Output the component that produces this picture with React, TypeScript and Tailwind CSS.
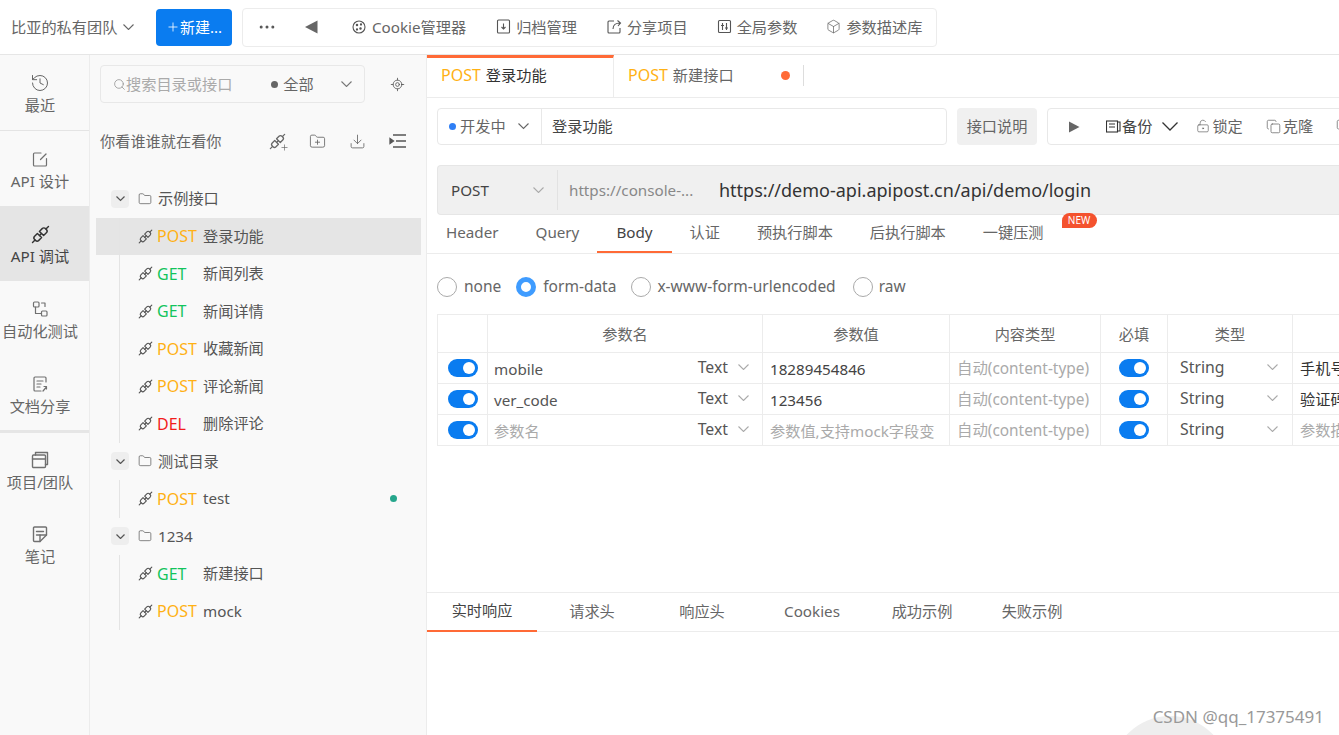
import { Box, History, Folder, FolderPlus, Download, LockKeyholeOpen, Copy, Search, LocateFixed, Ellipsis, Plus } from "lucide-react";

const font = "font-['Noto_Sans','Noto_Sans_CJK_SC',sans-serif]";

function Chev({ w = 11, sw = 1.1, className = "" }: { w?: number; sw?: number; className?: string }) {
    return <svg width={w} height={w / 2 + 1} viewBox={`0 0 ${w} ${w / 2 + 1}`} fill="none" stroke="currentColor" strokeWidth={sw} className={`shrink-0 ${className}`}>
        <path d={`M0.500 0.500 ${w / 2} ${w / 2} ${w - 0.5} 0.500`} />
    </svg>
}

function PlugIcon({ size = 15, color = "#555" }: { size?: number; color?: string }) {
    return <svg width={size} height={size} viewBox="0 0 16 16" fill="none" stroke={color} strokeWidth={1.2} strokeLinecap="round" strokeLinejoin="round">
        <g transform="rotate(45 8 8)">
            <path d="M8 -1.500V1.500" />
            <path d="M5.500 6.800V3.500a2 2 0 0 1 2-2h1a2 2 0 0 1 2 2v3.300z" />
            <path d="M8 6.800v2.400" />
            <path d="M5.500 9.200v3.300a2 2 0 0 0 2 2h1a2 2 0 0 0 2-2V9.200z" />
            <path d="M8 14.500v3" />
        </g>
    </svg>
}

function RailIcon({ name }: { name: string }) {
    const common = { width: 20, height: 20, viewBox: "0 0 20 20", fill: "none", stroke: "#707070", strokeWidth: 1.2, strokeLinecap: "round" as const, strokeLinejoin: "round" as const };
    if (name === "history") return <History size={20} color="#666" strokeWidth={1.2} />;
    if (name === "edit") return <svg {...common}><path d="M11 4H4.500a1 1 0 0 0-1 1v11a1 1 0 0 0 1 1h11a1 1 0 0 0 1-1V9.500" /><path d="M10.500 10.500 16 5" /></svg>;
    if (name === "plug") return <PlugIcon size={19} color="#333" />;
    if (name === "flow") return <svg {...common}><rect x="3.500" y="3" width="5.500" height="5" rx="1" /><rect x="11.500" y="12" width="5.500" height="5" rx="1" /><path d="M5.500 8v6.500h6" /><path d="M11.500 4h3.500v3.500" /></svg>;
    if (name === "doc") return <svg {...common}><path d="M16 8V4a1 1 0 0 0-1-1H5a1 1 0 0 0-1 1v12a1 1 0 0 0 1 1h6" /><path d="M7 7h6M7 10h4M7 13h3" /><path d="M13 17l3.500-4M14 12.500h2.500V15" /></svg>;
    if (name === "project") return <svg {...common} strokeWidth={1.4}><rect x="2.500" y="5" width="13" height="12.500" rx="1" /><path d="M2.500 9h13" /><path d="M5.500 5V2.500h12V14.500h-2" /></svg>;
    return <svg {...common} strokeWidth={1.4}><path d="M16.500 11V4a1 1 0 0 0-1-1h-11a1 1 0 0 0-1 1v12.500a1 1 0 0 0 1 1H10z" /><path d="M6.500 7.500h7M6.500 11h3.500" /><path d="M16.500 11H10v6.500" /></svg>;
}

const rail = [
    { icon: "history", label: "最近", cls: "h-[76px] border-b border-[#e4e4e4]" },
    { icon: "edit", label: "API 设计", cls: "h-[75px]" },
    { icon: "plug", label: "API 调试", cls: "h-[75px] bg-[#e5e5e5] text-[#444]" },
    { icon: "flow", label: "自动化测试", cls: "h-[75px]" },
    { icon: "doc", label: "文档分享", cls: "h-[77px] border-b-[3px] border-[#e6e6e6]" },
    { icon: "project", label: "项目/团队", cls: "h-[73px]" },
    { icon: "note", label: "笔记", cls: "h-[75px]" },
];

const methodColor: Record<string, string> = {
    POST: "text-[#ffb114]",
    GET: "text-[#13c45c]",
    DEL: "text-[#f21c1c]",
};

type TreeGroup = { name: string; items: { method: string; name: string; active?: boolean; dot?: boolean }[] };

const tree: TreeGroup[] = [
    {
        name: "示例接口", items: [
            { method: "POST", name: "登录功能", active: true },
            { method: "GET", name: "新闻列表" },
            { method: "GET", name: "新闻详情" },
            { method: "POST", name: "收藏新闻" },
            { method: "POST", name: "评论新闻" },
            { method: "DEL", name: "删除评论" },
        ]
    },
    { name: "测试目录", items: [{ method: "POST", name: "test", dot: true }] },
    {
        name: "1234", items: [
            { method: "GET", name: "新建接口" },
            { method: "POST", name: "mock" },
        ]
    },
];

function Toggle() {
    return <span className="flex h-[18px] w-[30px] items-center justify-end rounded-full bg-[#0a7cf0] pr-[3px]">
        <span className="size-3 rounded-full bg-white" />
    </span>
}

function Cell({ w, className = "", children }: { w: string; className?: string; children?: React.ReactNode }) {
    return <div className={`${w} flex shrink-0 items-center border-r border-[#ececec] ${className}`}>{children}</div>
}

const rows = [
    { name: "mobile", value: "18289454846", desc: "手机号" },
    { name: "ver_code", value: "123456", desc: "验证码" },
    { name: "", value: "", desc: "" },
];

export default function App() {
    return <div className={`${font} flex h-[735px] w-[1339px] flex-col overflow-hidden bg-white text-[15.2px] text-[#666]`}>
        {/* top bar */}
        <header className="flex h-[55px] shrink-0 items-center border-b border-[#e6e6e6]">
            <div className="flex w-[156px] shrink-0 items-center pl-[11px]">
                <span className="whitespace-nowrap">比亚的私有团队</span>
                <Chev className="ml-[6px]" />
            </div>
            <button className="flex h-[37px] w-[76px] items-center justify-center rounded bg-[#0a7cf0] text-[15px] text-white">
                <Plus size={14} strokeWidth={1.4} />新建...
            </button>
            <div className="ml-[10px] flex h-[39px] w-[695px] items-center rounded border border-[#ececec] whitespace-nowrap">
                <Ellipsis size={20} strokeWidth={1.6} className="ml-[14px] text-[#555]" />
                <svg width="14" height="14" viewBox="0 0 14 14" className="ml-[27px]"><path d="M13.500 0.500V13.500L1 7z" fill="#666" /></svg>
                <span className="ml-[34px] flex items-center gap-[6px]">
                    <svg width="14" height="14" viewBox="0 0 14 14" fill="none" stroke="#555" strokeWidth={1.1}><circle cx="7" cy="7" r="6" /><circle cx="5" cy="5" r="0.700" fill="#555" /><circle cx="9" cy="4.500" r="0.600" fill="#555" /><circle cx="8.500" cy="8.500" r="0.700" fill="#555" /><circle cx="5" cy="9.500" r="0.600" fill="#555" /></svg>
                    Cookie管理器
                </span>
                <span className="ml-[30px] flex items-center gap-[5px]">
                    <svg width="15" height="15" viewBox="0 0 15 15" fill="none" stroke="#555" strokeWidth={1.1}><rect x="1.500" y="1" width="12" height="13" rx="1" /><path d="M7.500 4.500v5M5.500 8l2 2 2-2" /></svg>
                    归档管理
                </span>
                <span className="ml-[30px] flex items-center gap-[5px]">
                    <svg width="15" height="15" viewBox="0 0 15 15" fill="none" stroke="#555" strokeWidth={1.1}><path d="M7 2H2a1 1 0 0 0-1 1v10a1 1 0 0 0 1 1h10a1 1 0 0 0 1-1V9" /><path d="M6 10c0-4 3-6 7-6M10.500 1.500 13.500 4l-2.500 3" /></svg>
                    分享项目
                </span>
                <span className="ml-[29px] flex items-center gap-[5px]">
                    <svg width="15" height="15" viewBox="0 0 15 15" fill="none" stroke="#555" strokeWidth={1.1}><rect x="1.500" y="1.500" width="12" height="12" rx="1" /><path d="M5.500 4v7M9.500 4v7M4 6.500h3M8 9h3" /></svg>
                    全局参数
                </span>
                <span className="ml-[29px] flex items-center gap-[5px]"><Box size={15} strokeWidth={1.2} />参数描述库</span>
            </div>
        </header>

        <div className="flex min-h-0 flex-1">
            {/* icon rail */}
            <nav className="w-[90px] shrink-0 border-r border-[#ececec] bg-[#f9f9f9]">
                {rail.map((r) => <div key={r.label} className={`flex flex-col items-center justify-center gap-[2px] pr-[9px] pt-[3px] ${r.cls}`}>
                    <RailIcon name={r.icon} />
                    <span className="whitespace-nowrap leading-5">{r.label}</span>
                </div>)}
            </nav>

            {/* tree */}
            <aside className="flex w-[337px] shrink-0 flex-col border-r border-[#ececec] bg-[#f9f9f9] pl-[6px] pr-[5px]">
                <div className="mt-[10px] flex items-center pl-1">
                    <div className="flex h-[38px] w-[265px] items-center rounded border border-[#e8e8e8] pl-[12px] pr-[12px] text-[#aaa]">
                        <Search size={13} strokeWidth={1.3} className="text-[#888]" />
                        <span className="whitespace-nowrap">搜索目录或接口</span>
                        <span className="ml-[39px] size-[7px] shrink-0 rounded-full bg-[#666]" />
                        <span className="ml-[5px] whitespace-nowrap text-[#666]">全部</span>
                        <Chev className="ml-auto text-[#777]" />
                    </div>
                    <LocateFixed size={15} strokeWidth={1.3} className="ml-[25px] text-[#555]" />
                </div>
                <div className="mt-[19px] flex h-[38px] items-center pl-1 pr-[14px]">
                    <span>你看谁谁就在看你</span>
                    <span className="ml-auto flex items-center gap-[23px] text-[#666]">
                        <span className="relative"><PlugIcon size={17} color="#666" /><Plus size={9} strokeWidth={1.8} className="absolute -bottom-[2px] -right-[3px]" /></span>
                        <FolderPlus size={17} strokeWidth={1.2} />
                        <Download size={17} strokeWidth={1.2} />
                        <svg width="18" height="16" viewBox="0 0 18 16" fill="none" stroke="#555" strokeWidth={1.3}><path d="M4 2h13M7 8h10M4 14h13" /><path d="M1 5.500 4.500 8 1 10.500z" fill="#555" /></svg>
                    </span>
                </div>
                <div className="mt-[20px]">
                    {tree.map((g) => <div key={g.name}>
                        <div className="flex h-[37.5px] items-center pl-[15px] text-[#555]">
                            <span className="flex size-[18px] items-center justify-center rounded bg-[#eeeeee]"><Chev w={9} sw={1.2} /></span>
                            <Folder size={14} strokeWidth={1.2} className="ml-[9px]" />
                            <span className="ml-[6px]">{g.name}</span>
                        </div>
                        <div className="relative">
                            <span className="absolute bottom-0 left-[23px] top-0 w-px bg-[#e4e4e4]" />
                            {g.items.map((it) => <div key={it.name} className={`flex h-[37.5px] items-center pl-[42px] pr-[24px] ${it.active ? "bg-[#e5e5e5]" : ""}`}>
                                <PlugIcon />
                                <span className={`ml-[4px] w-[46px] text-[16px] ${methodColor[it.method]}`}>{it.method}</span>
                                <span className="text-[#555]">{it.name}</span>
                                {it.dot && <span className="ml-auto size-[7px] rounded-full bg-[#26a68c]" />}
                            </div>)}
                        </div>
                    </div>)}
                </div>
            </aside>

            {/* main */}
            <main className="relative min-w-0 flex-1 overflow-hidden">
                <div className="flex h-[43px] border-b border-[#ececec]">
                    <div className="flex h-[42px] w-[187px] items-center border-r border-t-[3px] border-r-[#ececec] border-t-[#ff6a36] pb-[5px] pl-[14px]">
                        <span className="text-[16px] text-[#ffb114]">POST</span>
                        <span className="ml-[5px] text-[#333]">登录功能</span>
                    </div>
                    <div className="flex w-[189px] items-center pb-[2px] pl-[14px]">
                        <span className="text-[16px] text-[#ffb114]">POST</span>
                        <span className="ml-[5px] w-[108px] shrink-0">新建接口</span>
                        <span className="size-[9px] shrink-0 rounded-full bg-[#ff6a36]" />
                        <span className="ml-[13px] h-[21px] w-px shrink-0 bg-[#dddddd]" />
                    </div>
                </div>

                <div className="mt-[10px] flex h-[37px] pl-[10px]">
                    <div className="flex w-[510px] shrink-0 rounded border border-[#e8e8e8]">
                        <div className="flex w-[104px] shrink-0 items-center border-r border-[#e8e8e8] pl-[11px]">
                            <span className="size-[7px] shrink-0 rounded-full bg-[#2f7ff5]" />
                            <span className="ml-[4px] whitespace-nowrap">开发中</span>
                            <Chev className="ml-[12px]" />
                        </div>
                        <div className="flex items-center pl-[10px] text-[#444]">登录功能</div>
                    </div>
                    <button className="ml-[10px] w-[80px] shrink-0 rounded bg-[#f0f0f0] text-center">接口说明</button>
                    <div className="ml-[10px] flex w-[320px] shrink-0 items-center rounded border border-[#e8e8e8] whitespace-nowrap">
                        <svg width="12" height="12" viewBox="0 0 12 12" className="ml-[20px] shrink-0"><path d="M1 0.500 11.500 6 1 11.500z" fill="#666" /></svg>
                        <span className="ml-[26px] flex items-center gap-px text-[#444]">
                            <svg width="15" height="13" viewBox="0 0 15 13" fill="none" stroke="#333" strokeWidth={1.1}><rect x="0.500" y="1" width="11" height="11" /><path d="M3 4h6M3 7h6M11.500 2H14v9h-2.500" /></svg>
                            备份
                        </span>
                        <Chev w={16} sw={1.3} className="ml-[10px] text-[#333]" />
                        <span className="ml-[18px] flex items-center gap-[2px]"><LockKeyholeOpen size={14} strokeWidth={1.2} />锁定</span>
                        <span className="ml-[23px] flex items-center gap-[2px]"><Copy size={15} strokeWidth={1.2} />克隆</span>
                        <Copy size={15} strokeWidth={1.2} className="ml-[23px] shrink-0" />
                    </div>
                </div>

                <div className="ml-[10px] mt-[20px] flex h-[50px] w-[920px] items-center rounded-l border border-r-0 border-[#e6e6e6] bg-[#f0f0f0]">
                    <div className="flex h-[40px] w-[120px] shrink-0 items-center border-r border-[#e2e2e2] pl-[13px] text-[#444]">
                        POST
                        <Chev className="ml-auto mr-[13px] text-[#aaa]" />
                    </div>
                    <span className="ml-[11px] w-[150px] shrink-0 whitespace-nowrap text-[#888]">https://console-...</span>
                    <span className="mt-[1px] whitespace-nowrap text-[18px] text-[#333]">https://demo-api.apipost.cn/api/demo/login</span>
                </div>

                <div className="flex h-[39px] gap-[37px] border-b border-[#ececec] pl-[19px]">
                    <span className="flex h-[34px] items-center">Header</span>
                    <span className="flex h-[34px] items-center">Query</span>
                    <span className="relative flex h-[38px] items-center pb-[4px] text-[#444]">
                        Body
                        <span className="absolute -left-[19px] -right-[19px] bottom-0 h-[2px] bg-[#ff6a36]" />
                    </span>
                    <span className="flex h-[34px] items-center">认证</span>
                    <span className="flex h-[34px] items-center">预执行脚本</span>
                    <span className="flex h-[34px] items-center">后执行脚本</span>
                    <span className="relative flex h-[34px] items-center">
                        一键压测
                        <span className="absolute -right-[53px] -top-[2px] flex h-[15px] w-[35px] items-center justify-center rounded-t-full rounded-br-full bg-[#f4522e] text-[10px] text-white">NEW</span>
                    </span>
                </div>

                <div className="flex h-[60px] items-center gap-[15px] pl-[10px] pt-[6px] text-[15.5px]">
                    <label className="flex items-center gap-[7px]"><span className="size-5 rounded-full border border-[#aaa]" />none</label>
                    <label className="flex items-center gap-[7px]"><span className="size-5 rounded-full border-[5px] border-[#3f9cff]" />form-data</label>
                    <label className="flex items-center gap-[6px]"><span className="size-5 rounded-full border border-[#aaa]" />x-www-form-urlencoded</label>
                    <label className="ml-[2px] flex items-center gap-[6px]"><span className="size-5 rounded-full border border-[#aaa]" />raw</label>
                </div>

                <div className="ml-[10px] w-[902px] border-l border-t border-[#ececec]">
                    <div className="flex h-[38px] border-b border-[#ececec] pt-[2px] text-center">
                        <Cell w="w-[50px]" className="-mt-[2px]" />
                        <Cell w="w-[275px]" className="-mt-[2px] justify-center pt-[2px]">参数名</Cell>
                        <Cell w="w-[187px]" className="-mt-[2px] justify-center pt-[2px]">参数值</Cell>
                        <Cell w="w-[151px]" className="-mt-[2px] justify-center pt-[2px]">内容类型</Cell>
                        <Cell w="w-[67px]" className="-mt-[2px] justify-center pt-[2px]">必填</Cell>
                        <Cell w="w-[125px]" className="-mt-[2px] justify-center pt-[2px]">类型</Cell>
                        <div className="flex-1" />
                    </div>
                    {rows.map((r, i) => <div key={i} className="flex h-[31px] border-b border-[#ececec]">
                        <Cell w="w-[50px]" className="justify-center"><Toggle /></Cell>
                        <Cell w="w-[275px]" className="pl-[6px] pt-[2px]">
                            <span className={r.name ? "text-[#555]" : "text-[#aaa]"}>{r.name || "参数名"}</span>
                            <span className="ml-auto -translate-y-[1px] text-[15.8px] text-[#555]">Text</span>
                            <Chev className="ml-[10px] mr-[13px] -translate-y-[2px] text-[#aaa]" />
                        </Cell>
                        <Cell w="w-[187px]" className="overflow-hidden whitespace-nowrap pl-[7px] pt-[2px]">
                            <span className={r.value ? "text-[#444]" : "text-[#aaa]"}>{r.value || "参数值,支持mock字段变"}</span>
                        </Cell>
                        <Cell w="w-[151px]" className="whitespace-nowrap pl-[7px] pt-[2px] text-[15.4px] text-[#aaa]">自动(content-type)</Cell>
                        <Cell w="w-[67px]" className="justify-center"><Toggle /></Cell>
                        <Cell w="w-[125px]" className="pl-[12px]">
                            <span className="text-[15.8px] text-[#555]">String</span>
                            <Chev className="ml-auto mr-[14px] -translate-y-[1px] text-[#aaa]" />
                        </Cell>
                        <div className={`flex-1 overflow-hidden whitespace-nowrap pl-[7px] leading-[31px] ${r.desc ? "text-[#333]" : "text-[#aaa]"}`}>{r.desc || "参数描述"}</div>
                    </div>)}
                </div>

                <div className="mt-[146px] flex h-[40px] border-y border-[#ececec]">
                    {["实时响应", "请求头", "响应头", "Cookies", "成功示例", "失败示例"].map((t, i) => <span key={t} className={`flex h-[39px] w-[110px] items-center justify-center pb-[3px] ${i === 0 ? "border-b-2 border-[#ff6a36] text-[#444]" : ""}`}>{t}</span>)}
                </div>

                {/* empty state art peeking in, watermark on top */}
                <span className="absolute left-[684px] top-[661px] size-[118px] rounded-full bg-[#eeeeee]" />
                <span className="absolute right-[15px] top-[650px] text-[17px] leading-6 text-[#999]">CSDN @qq_17375491</span>
            </main>
        </div>
    </div>
}
